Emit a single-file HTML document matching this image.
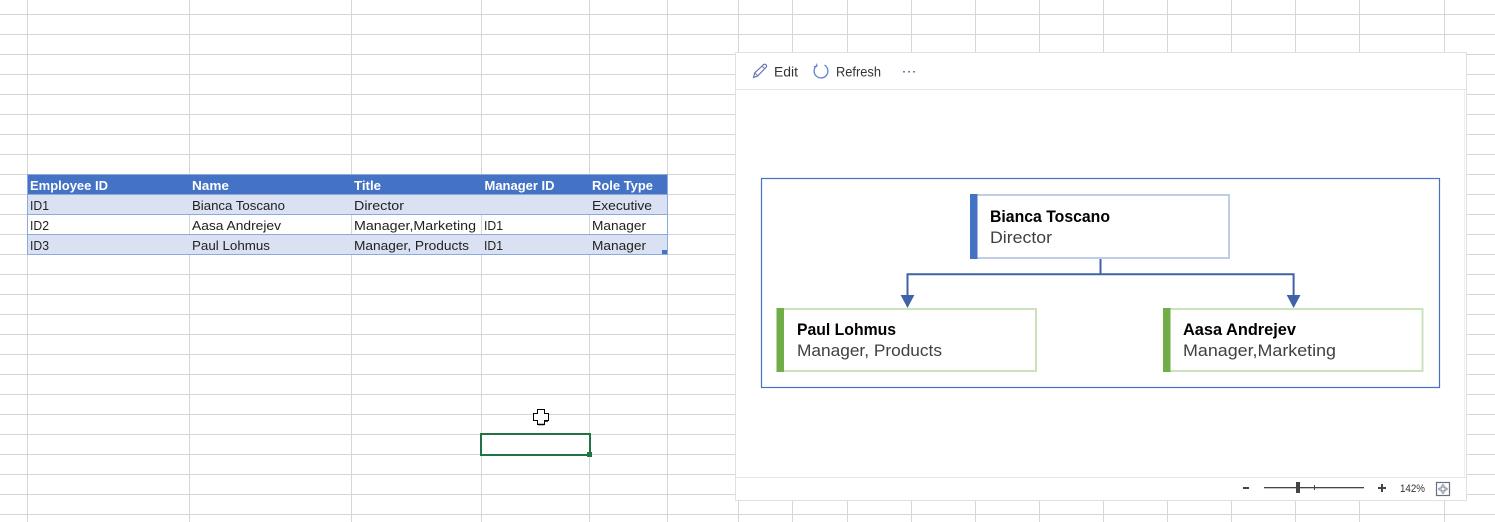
<!DOCTYPE html>
<html><head><meta charset="utf-8"><title>Org chart</title>
<style>
html,body{margin:0;padding:0;background:#fff;width:1495px;height:522px;overflow:hidden}
svg{display:block;font-family:"Liberation Sans",sans-serif}
</style></head><body>
<svg width="1495" height="522" viewBox="0 0 1495 522" xmlns="http://www.w3.org/2000/svg">
<rect width="1495" height="522" fill="#fff"/>
<!-- grid -->
<path fill="none" stroke="#D6D6D6" stroke-width="1" d="M0 14.5H1495M0 34.5H1495M0 54.5H1495M0 74.5H1495M0 94.5H1495M0 114.5H1495M0 134.5H1495M0 154.5H1495M0 174.5H1495M0 194.5H1495M0 214.5H1495M0 234.5H1495M0 254.5H1495M0 274.5H1495M0 294.5H1495M0 314.5H1495M0 334.5H1495M0 354.5H1495M0 374.5H1495M0 394.5H1495M0 414.5H1495M0 434.5H1495M0 454.5H1495M0 474.5H1495M0 494.5H1495M0 514.5H1495
M27.5 0V522M189.5 0V522M351.5 0V522M481.5 0V522M589.5 0V522M667.5 0V522M738.5 0V522M792.5 0V522M847.5 0V522M911.5 0V522M975.5 0V522M1039.5 0V522M1103.5 0V522M1167.5 0V522M1231.5 0V522M1295.5 0V522M1359.5 0V522M1444.5 0V522"/>
<!-- table -->
<rect x="27" y="175" width="641" height="19" fill="#4472C4"/>
<rect x="28" y="195" width="640" height="19" fill="#D9E1F2"/>
<rect x="28" y="235" width="640" height="19" fill="#D9E1F2"/>
<path fill="none" stroke="#8EA9DB" stroke-width="1" d="M27 174.5H668M27 194.5H668M27 214.5H668M27 234.5H668M27 254.5H668M27.5 174V255M667.5 174V255"/>
<path fill="#4472C4" d="M662 250H667V254H662Z"/>
<g font-size="13" font-weight="bold" fill="#fff">
<text x="30" y="190" textLength="78" lengthAdjust="spacingAndGlyphs">Employee ID</text>
<text x="192" y="190" textLength="37" lengthAdjust="spacingAndGlyphs">Name</text>
<text x="354" y="190" textLength="27" lengthAdjust="spacingAndGlyphs">Title</text>
<text x="484.5" y="190" textLength="70" lengthAdjust="spacingAndGlyphs">Manager ID</text>
<text x="592" y="190" textLength="61" lengthAdjust="spacingAndGlyphs">Role Type</text>
</g>
<g font-size="13" fill="#222">
<text x="30" y="210" textLength="19" lengthAdjust="spacingAndGlyphs">ID1</text>
<text x="192" y="210" textLength="93" lengthAdjust="spacingAndGlyphs">Bianca Toscano</text>
<text x="354" y="210" textLength="50" lengthAdjust="spacingAndGlyphs">Director</text>
<text x="592" y="210" textLength="60" lengthAdjust="spacingAndGlyphs">Executive</text>
<text x="30" y="230" textLength="19" lengthAdjust="spacingAndGlyphs">ID2</text>
<text x="192" y="230" textLength="89" lengthAdjust="spacingAndGlyphs">Aasa Andrejev</text>
<text x="354" y="230" textLength="122" lengthAdjust="spacingAndGlyphs">Manager,Marketing</text>
<text x="484" y="230" textLength="19" lengthAdjust="spacingAndGlyphs">ID1</text>
<text x="592" y="230" textLength="54" lengthAdjust="spacingAndGlyphs">Manager</text>
<text x="30" y="250" textLength="19" lengthAdjust="spacingAndGlyphs">ID3</text>
<text x="192" y="250" textLength="78" lengthAdjust="spacingAndGlyphs">Paul Lohmus</text>
<text x="354" y="250" textLength="115" lengthAdjust="spacingAndGlyphs">Manager, Products</text>
<text x="484" y="250" textLength="19" lengthAdjust="spacingAndGlyphs">ID1</text>
<text x="592" y="250" textLength="54" lengthAdjust="spacingAndGlyphs">Manager</text>
</g>
<!-- selected cell -->
<rect x="481" y="434" width="109" height="21" fill="none" stroke="#217346" stroke-width="2"/>
<rect x="587" y="452" width="5" height="5" fill="#217346"/>
<!-- cursor -->
<path d="M537.5 409.5H544.5V413.5H548.5V420.5H544.5V424.5H537.5V420.5H533.5V413.5H537.5Z" fill="#fff" stroke="#000" stroke-width="1"/>
<path d="M538 424.500H544.500M545 421H548" stroke="#000" stroke-width="1.6" fill="none"/>
<!-- panel -->
<rect x="735.5" y="52.5" width="731" height="448" fill="#fff" stroke="#E1E1E1" stroke-width="1"/>
<path d="M736 89.5H1466M736 477.5H1466" stroke="#E6E6E6" stroke-width="1" fill="none"/>
<path d="M1464.5 90V477" stroke="#EFEFEF" stroke-width="1" fill="none"/>
<!-- toolbar -->
<path d="M753.5 77.5L754.8 72.8L763.5 64.6Q764.8 63.6 766 64.8Q767.2 66 766.1 67.3L757.6 76Z" fill="none" stroke="#5A6FB5" stroke-width="1.1"/>
<path d="M755 73L758 76M762 66L765 69" stroke="#8A6FA8" stroke-width="1" fill="none"/>
<text x="774" y="76.5" font-size="13.5" fill="#333" textLength="24" lengthAdjust="spacingAndGlyphs">Edit</text>
<path d="M816.5 65.8A6.9 6.9 0 1 0 824.5 65.1" fill="none" stroke="#5F83C9" stroke-width="1.3"/>
<path d="M816.8 63.6V66.5H813.9" fill="none" stroke="#5F83C9" stroke-width="1.1"/>
<text x="836" y="76.5" font-size="13.5" fill="#333" textLength="45" lengthAdjust="spacingAndGlyphs">Refresh</text>
<g fill="#6F7AA6"><rect x="903" y="71" width="2" height="1.5"/><rect x="908" y="71" width="2" height="1.5"/><rect x="913" y="71" width="2" height="1.5"/></g>
<!-- org chart frame -->
<rect x="761.5" y="178.5" width="678" height="209" fill="#fff" stroke="#4472C4" stroke-width="1.2"/>
<!-- connectors -->
<path d="M1100.5 258V274.3M907.5 296V274.3H1293.6V296" fill="none" stroke="#3F62A8" stroke-width="2"/>
<path d="M900.6 295L914.4 295L907.5 308Z" fill="#3F62A8"/>
<path d="M1286.7 295L1300.5 295L1293.6 308Z" fill="#3F62A8"/>
<!-- boxes -->
<rect x="971" y="195" width="258" height="63" fill="#fff" stroke="#BFCDE9" stroke-width="2"/>
<rect x="970" y="194" width="7.5" height="65" fill="#4472C4"/>
<rect x="778" y="309" width="258" height="62" fill="#fff" stroke="#CBE3BC" stroke-width="2"/>
<rect x="776.5" y="308" width="7.5" height="64" fill="#70AD47"/>
<rect x="1164" y="309" width="258.5" height="62" fill="#fff" stroke="#CBE3BC" stroke-width="2"/>
<rect x="1163" y="308" width="7.5" height="64" fill="#70AD47"/>
<g font-size="17" font-weight="bold" fill="#000">
<text x="990" y="222" textLength="120" lengthAdjust="spacingAndGlyphs">Bianca Toscano</text>
<text x="797" y="335" textLength="99" lengthAdjust="spacingAndGlyphs">Paul Lohmus</text>
<text x="1183" y="335" textLength="113" lengthAdjust="spacingAndGlyphs">Aasa Andrejev</text>
</g>
<g font-size="17" fill="#404040">
<text x="990" y="243" textLength="62" lengthAdjust="spacingAndGlyphs">Director</text>
<text x="797" y="356" textLength="145" lengthAdjust="spacingAndGlyphs">Manager, Products</text>
<text x="1183" y="356" textLength="153" lengthAdjust="spacingAndGlyphs">Manager,Marketing</text>
</g>
<!-- footer -->
<rect x="1243" y="487" width="6" height="2" fill="#444"/>
<rect x="1264" y="487" width="100" height="1.3" fill="#444"/>
<rect x="1296" y="482" width="4" height="11" fill="#444"/>
<rect x="1314" y="485" width="1" height="5" fill="#444"/>
<path d="M1378 488H1386M1382 484V492" stroke="#444" stroke-width="2" fill="none"/>
<text x="1400" y="492" font-size="11" fill="#333" textLength="25" lengthAdjust="spacingAndGlyphs">142%</text>
<rect x="1436.5" y="482.5" width="13" height="13" fill="#fff" stroke="#707070" stroke-width="1.2"/>
<rect x="1441" y="487" width="4" height="4" fill="none" stroke="#777" stroke-width="1"/>
<path d="M1443 483.8L1445 485.8H1441ZM1443 494.2L1445 492.2H1441ZM1437.8 489L1439.8 487V491ZM1448.2 489L1446.2 487V491Z" fill="#6A9BD4"/>
</svg>
</body></html>
